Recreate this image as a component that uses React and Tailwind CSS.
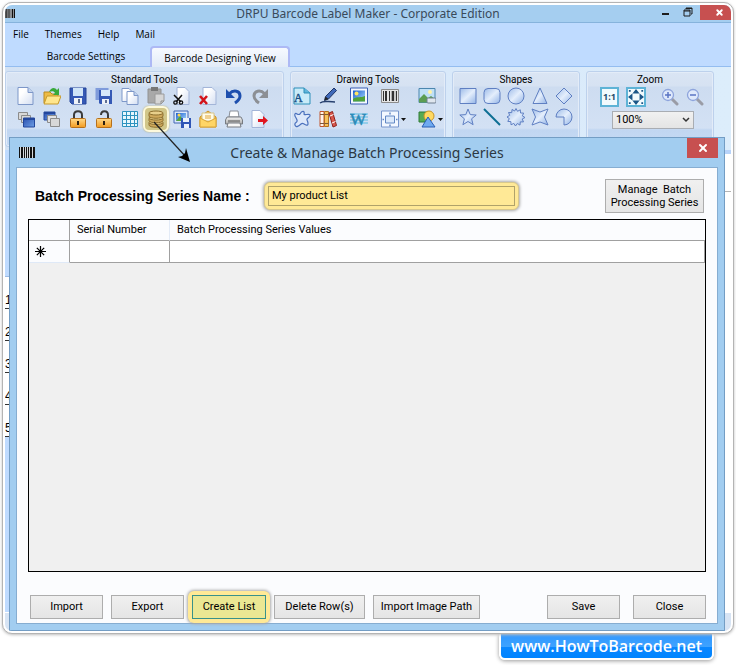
import { X } from 'lucide-react'

function Icon({ children, box = '0 0 18 18', className = 'size-[18px]' }) {
  return (
    <svg viewBox={box} className={`${className} shrink-0`} fill="none" aria-hidden="true">
      {children}
    </svg>
  )
}

function Gradients() {
  return (
    <svg className="absolute size-0" aria-hidden="true">
      <defs>
        <linearGradient id="page" x1="0" y1="0" x2="1" y2="1">
          <stop offset="0.3" stopColor="#ffffff" />
          <stop offset="1" stopColor="#d3def2" />
        </linearGradient>
        <linearGradient id="shape" x1="0" y1="0" x2="1" y2="1">
          <stop offset="0" stopColor="#9dbbe8" />
          <stop offset="0.5" stopColor="#e4eefc" />
          <stop offset="1" stopColor="#93b4e6" />
        </linearGradient>
        <linearGradient id="blue" x1="0" y1="0" x2="1" y2="1">
          <stop offset="0" stopColor="#2a4fae" />
          <stop offset="1" stopColor="#6fa0e6" />
        </linearGradient>
        <linearGradient id="gold" x1="0" y1="0" x2="0" y2="1">
          <stop offset="0" stopColor="#ffd98a" />
          <stop offset="1" stopColor="#f29a1f" />
        </linearGradient>
        <linearGradient id="grey" x1="0" y1="0" x2="0" y2="1">
          <stop offset="0" stopColor="#f4f4f4" />
          <stop offset="1" stopColor="#a9a9a9" />
        </linearGradient>
        <linearGradient id="sky" x1="0" y1="0" x2="1" y2="1">
          <stop offset="0" stopColor="#1d5fd0" />
          <stop offset="1" stopColor="#a9dcff" />
        </linearGradient>
      </defs>
    </svg>
  )
}

const Page = ({ x = 1 }) => (
  <>
    <path d={`M${x} .5h10l5 5v12h-15z`} fill="url(#page)" stroke="#7d97c8" />
    <path d={`M${x + 10} .5v5h5`} fill="#c3d3ee" stroke="#7d97c8" />
  </>
)

const Floppy = () => (
  <>
    <path d="M1 1h16v16H3l-2-2z" fill="#3559b5" stroke="#27479a" />
    <path d="M4 1h10v8H4z" fill="#cfe4f8" />
    <path d="M5 11h8v6H5z" fill="#eef2f8" />
    <path d="M9 12h2v4H9z" fill="#5d6f95" />
  </>
)

const Lock = ({ open }) => (
  <>
    <path d={open ? 'M6 5c0-5 7-5 7 0v4' : 'M5 9V5c0-5 8-5 8 0v4'} stroke="#3b3b3b" strokeWidth="2" />
    <rect x="1.5" y="8.5" width="15" height="9" rx="1" fill="url(#gold)" stroke="#b5701c" />
    <path d="M8 11h2v4H8z" fill="#2c2010" />
  </>
)

const STANDARD_TOOLS = [
  { name: 'New', art: <Page /> },
  {
    name: 'Open',
    art: (
      <>
        <path d="M1 16V5h6l2 2h6v9z" fill="#eebc45" stroke="#b98a21" />
        <path d="M1 17l3-8h14l-3 8z" fill="#ffe68d" stroke="#c79a2d" />
        <path d="M6 5c2-5 6-5 8-2l2-2v7h-6l2-2c-1-2-3-2-6-1z" fill="#39a939" />
      </>
    ),
  },
  { name: 'Save', art: <Floppy /> },
  {
    name: 'Save As',
    art: (
      <>
        <path d="M.5 1h13v12h-13z" fill="#7f9bdb" />
        <path d="M4 3h13v14H5l-1-1z" fill="#3559b5" />
        <path d="M6 3h9v6H6z" fill="#d6e8fa" />
        <path d="M7 12h7v5H7z" fill="#eef2f8" />
        <path d="M10 13h2v3h-2z" fill="#5d6f95" />
      </>
    ),
  },
  {
    name: 'Copy',
    art: (
      <>
        <path d="M1 1.500h7l3 3v10H1z" fill="url(#page)" stroke="#7d97c8" />
        <path d="M6 4.500h7l4 4v9H6z" fill="url(#page)" stroke="#7d97c8" />
        <path d="M13 4.500v4h4" fill="#c3d3ee" stroke="#7d97c8" />
      </>
    ),
  },
  {
    name: 'Paste',
    art: (
      <>
        <path d="M1 2h13v14H1z" fill="#a9a9a9" stroke="#929292" />
        <path d="M4 0h7v4H4z" fill="#777" />
        <path d="M8 7h9v7l-3 3H8z" fill="#d6d6d6" stroke="#9a9a9a" />
        <path d="M17 14h-3v3" stroke="#8f8f8f" />
      </>
    ),
  },
  {
    name: 'Cut',
    art: (
      <>
        <path d="M4 .5h8l4 4v13H4z" fill="url(#page)" stroke="#a3b5d8" />
        <path d="M1 8l7 7M9 8l-6 7" stroke="#111" strokeWidth="1.500" />
        <circle cx="2.500" cy="15.500" r="1.700" stroke="#111" strokeWidth="1.300" />
        <circle cx="8" cy="15.500" r="1.700" stroke="#111" strokeWidth="1.300" />
      </>
    ),
  },
  {
    name: 'Delete',
    art: (
      <>
        <path d="M4 .5h9l4 4v13H4z" fill="url(#page)" stroke="#a3b5d8" />
        <path d="M1 9l7 8M8 9l-7 8" stroke="#d3141b" strokeWidth="2.600" />
      </>
    ),
  },
  {
    name: 'Undo',
    art: (
      <>
        <path d="M4 7c5-5 11-3 11 2 0 3-2 5-5 7" stroke="#1d4fae" strokeWidth="3" />
        <path d="M1 2v9h9z" fill="#1d4fae" />
      </>
    ),
  },
  {
    name: 'Redo',
    art: (
      <>
        <path d="M14 7C9 2 3 4 3 9c0 3 2 5 5 7" stroke="#8c8f94" strokeWidth="3" />
        <path d="M17 2v9H8z" fill="#8c8f94" />
      </>
    ),
  },
  {
    name: 'Bring to Front',
    art: (
      <>
        <path d="M1.500 2.500h9v7h-9z" fill="#d8d8d8" stroke="#8b8b8b" />
        <path d="M4.500 5.500h9v7h-9z" fill="#d8d8d8" stroke="#8b8b8b" />
        <path d="M6.500 8h11v9h-11z" fill="url(#blue)" stroke="#23479c" />
        <path d="M6.500 8h11v2h-11z" fill="#23479c" />
      </>
    ),
  },
  {
    name: 'Send to Back',
    art: (
      <>
        <path d="M1 2h11v8H1z" fill="url(#blue)" stroke="#23479c" />
        <path d="M1 2h11v2H1z" fill="#23479c" />
        <path d="M4.500 5.500h9v7h-9z" fill="#e2e2e2" stroke="#8b8b8b" />
        <path d="M7.500 8.500h9v8h-9z" fill="#d8d8d8" stroke="#8b8b8b" />
      </>
    ),
  },
  { name: 'Lock', art: <Lock /> },
  { name: 'Unlock', art: <Lock open /> },
  {
    name: 'Grid',
    art: (
      <>
        <path d="M1.500 1.500h15v15h-15z" fill="#e8f7fd" />
        <path d="M1.500 1.500h15v15h-15zM1 5.500h16M1 9.500h16M1 13.500h16M5.500 1v16M9.500 1v16M13.500 1v16" stroke="#2f93bf" />
      </>
    ),
  },
  {
    name: 'Batch Processing Series',
    active: true,
    art: (
      <g fill="#cfa95c" stroke="#8d6f2e">
        <path d="M2 13v2c0 3 14 3 14 0v-2z" />
        <ellipse cx="9" cy="12.500" rx="7" ry="2" fill="#e8cf8b" />
        <path d="M2 8.500v2c0 3 14 3 14 0v-2z" />
        <ellipse cx="9" cy="8" rx="7" ry="2" fill="#e8cf8b" />
        <path d="M2 3.500v2.500c0 3 14 3 14 0V3.500z" />
        <ellipse cx="9" cy="3" rx="7" ry="2" fill="#e8cf8b" />
      </g>
    ),
  },
  {
    name: 'Save Image',
    art: (
      <>
        <path d="M1 1h14v12H1z" fill="#dbe8fa" stroke="#4064b4" />
        <path d="M3 3h10v8H3z" fill="url(#sky)" />
        <path d="M3 11l4-5 3 3 3-1v3z" fill="#58a53c" />
        <circle cx="6" cy="5" r="1.500" fill="#ffd64a" />
        <path d="M8 8h10v10H8z" fill="#2f56b6" />
        <path d="M10 8h6v4h-6zM11 14h5v4h-5z" fill="#e9f1fb" />
      </>
    ),
  },
  {
    name: 'Send Mail',
    art: (
      <>
        <path d="M1 7l8-6 8 6v10H1z" fill="#f4bf45" stroke="#c99024" />
        <path d="M3 3h12v8H3z" fill="#fffbe6" stroke="#d7c48c" />
        <path d="M6 6h6M6 8h6" stroke="#dfa43b" />
        <path d="M1 8l8 4 8-4v9H1z" fill="#ffd566" stroke="#d9a437" />
      </>
    ),
  },
  {
    name: 'Print',
    art: (
      <>
        <path d="M5 1h8l1 6H4z" fill="#fff" stroke="#8a8f98" />
        <path d="M2 7h14l1.500 3v4H.5v-4z" fill="url(#grey)" stroke="#777b81" />
        <path d="M3 13h12l1 4H2z" fill="#f7f7f7" stroke="#777b81" />
        <path d="M3 11h12" stroke="#555" />
      </>
    ),
  },
  {
    name: 'Exit',
    art: (
      <>
        <path d="M1 .5h8l4 4v13H1z" fill="url(#page)" stroke="#a3b5d8" />
        <path d="M7 9h5V6l5 4.500-5 4.500v-3H7z" fill="#e0151f" />
      </>
    ),
  },
]

const DRAWING_TOOLS = [
  {
    name: 'Text',
    art: (
      <>
        <path d="M1 1h10l6 5v11H1z" fill="#c9ebf8" stroke="#2d8fb9" />
        <path d="M11 1v5h6" fill="#5fb6da" stroke="#2d8fb9" />
        <text x="1" y="15" fontSize="12" fontFamily="Liberation Serif" fill="#174e86" stroke="#174e86" strokeWidth=".4">
          A
        </text>
      </>
    ),
  },
  {
    name: 'Pencil',
    art: (
      <>
        <path d="M15 1l2.500 2.500-8 8.500-4 1.500 1-4z" fill="#3f69b9" stroke="#1f3464" />
        <path d="M6.500 9.500l3 2.500-4 1.500z" fill="#222" />
        <path d="M1 16c4-3 7-1 15-1" stroke="#27406f" strokeWidth="1.500" />
      </>
    ),
  },
  {
    name: 'Picture',
    art: (
      <>
        <path d="M.5 1h17v16H.5z" fill="#f4f8ff" stroke="#3b5fb4" />
        <path d="M3 3.500h12v11H3z" fill="url(#sky)" />
        <path d="M3 12c4-3 8-1 12-3v5.500H3z" fill="#4fa23c" />
        <circle cx="6.500" cy="6.500" r="2" fill="#ffe564" />
      </>
    ),
  },
  {
    name: 'Barcode',
    art: (
      <>
        <path d="M.5 2.500h17v13H.5z" fill="#e6e6e6" stroke="#8b8b8b" />
        <path d="M2.500 4v10M8.500 4v10M15.500 4v10" stroke="#333" />
        <path d="M5 4v10M12 4v10" stroke="#333" strokeWidth="2" />
        <path d="M14 4v10M10.500 4v10" stroke="#888" strokeWidth=".6" />
      </>
    ),
  },
  {
    name: 'Watermark',
    art: (
      <>
        <path d="M1 1.500h16v14H1z" fill="#bfe0f6" stroke="#4b86ae" />
        <circle cx="12" cy="5" r="2" fill="#fff3a8" />
        <path d="M1 12l5-5 4 4 3-2 4 3v3.500H1z" fill="#5c9d52" />
        <rect x="9" y="11" width="9" height="5" rx="1" fill="#dfe6ee" stroke="#6f7f90" />
      </>
    ),
  },
  {
    name: 'Freeform',
    art: (
      <path
        d="M7 4c2-4 5-3 4 0 0 2 5-1 6 1s-4 3-3 5 2 6-1 5-3-3-5-1-5 4-6 1 3-2 2-5S1 6 2 4s3 2 5 0z"
        fill="#dde8fa"
        stroke="#4b71bd"
        strokeWidth="1.200"
      />
    ),
  },
  {
    name: 'Library',
    art: (
      <>
        <path d="M1 1.500h4v15H1z" fill="#fff4ea" stroke="#c3572f" />
        <path d="M5.500 1.500h4v15h-4z" fill="#f7c35c" stroke="#b5701c" />
        <path d="M10 3l3.500-1.500 4 14L14 17z" fill="#d9584d" stroke="#8e2019" />
        <path d="M1 4.500h4M1 13.500h4M5.500 4.500h4M5.500 13.500h4" stroke="#7e5a3a" />
        <path d="M11 6l3.500-1.500M13 13l3.500-1.500" stroke="#fff" />
      </>
    ),
  },
  {
    name: 'Word Art',
    art: (
      <>
        <path d="M0 4h18M0 7h18M0 10h18M0 13h18" stroke="#83c8e6" strokeWidth="1.500" />
        <text x="0" y="15" fontSize="17" fontFamily="Liberation Serif" fill="#2b8bb8" stroke="#2b8bb8" strokeWidth=".5">
          W
        </text>
      </>
    ),
  },
  {
    name: 'Align',
    menu: true,
    art: (
      <>
        <path d="M.5 1h17v16H.5z" fill="#f3f8ff" stroke="#7695cc" />
        <path d="M4.500 6h9v7h-9z" fill="#dbe9fb" stroke="#6288c4" />
        <path d="M9 2.500v2M9 14.500v2M1.500 9.500H3M15 9.500h1.500" stroke="#6288c4" strokeWidth="1.500" />
      </>
    ),
  },
  {
    name: 'Arrange Shapes',
    menu: true,
    art: (
      <>
        <path d="M1 2h9v10H1z" fill="#57ab54" stroke="#2f7a37" />
        <circle cx="11" cy="6" r="5" fill="#ffd963" stroke="#c79527" />
        <path d="M10 7l7 10H4z" fill="#6faaf0" stroke="#2a5eb4" />
      </>
    ),
  },
]

const SHAPES = [
  { name: 'Rectangle', art: <path d="M1 1.500h16v15H1z" /> },
  { name: 'Rounded rectangle', art: <rect x="1" y="1.500" width="16" height="15" rx="4" /> },
  { name: 'Ellipse', art: <circle cx="9" cy="9" r="8" /> },
  { name: 'Triangle', art: <path d="M9 1l7 15.500H2z" /> },
  { name: 'Diamond', art: <path d="M9 1l8 8-8 8-8-8z" /> },
  { name: 'Star', art: <path d="M9 1l2.200 5.600 6 .4-4.600 3.800 1.500 5.900L9 13.500l-5.100 3.200 1.500-5.900L.8 7l6-.4z" /> },
  { name: 'Line', art: <path d="M1 1l16 16" stroke="#0e6f93" strokeWidth="2" /> },
  {
    name: 'Burst',
    art: (
      <path d="M9 .5l1.500 2.800 2.800-1.500.2 3.200 3.200.1-1.400 2.700 2.700 1.700-2.800 1.500 1.300 2.900-3.200 0-.3 3.200-2.700-1.600L8.500 18l-1.700-2.600L4 16.800l-.1-3.200-3.100-.2 1.500-2.800L0 9l2.700-1.700L1.500 4.500l3.200.1.400-3.200L7.600 3z" />
    ),
  },
  { name: 'Four point star', art: <path d="M1 1l8 3 8-3-3.500 8L17 17l-8-3-8 3 3.500-8z" /> },
  { name: 'Pie', art: <path d="M1 9a8 8 0 1 1 8 8V9z" /> },
]

function Group({ title, className, children }) {
  return (
    <section
      className={`flex h-[76px] flex-col rounded-[3px] border border-[#bdd1ec] bg-[linear-gradient(#dae5f4_0px,#d6e2f2_14px,#cddcf0_15px,#d3e1f4_56px,#c1d6f1_58px,#c5daf5_100%)] shadow-[inset_0_0_0_1px_#e3ecf8] ${className}`}
    >
      <h2 className="text-center font-[Roboto,sans-serif] text-[10px] leading-[15px] text-black">{title}</h2>
      {children}
    </section>
  )
}

function Tool({ tool }) {
  return (
    <button
      type="button"
      title={tool.name}
      aria-label={tool.name}
      className={
        tool.active
          ? '-m-1 flex items-center rounded-md border-2 border-[#fdf9dc] bg-[#d1c689] p-0.5 shadow-[0_0_2px_#b9ad6a]'
          : 'flex items-center gap-0.5'
      }
    >
      <Icon>{tool.art}</Icon>
      {tool.menu && (
        <svg viewBox="0 0 5 3" className="h-[3px] w-[5px]" aria-hidden="true">
          <path d="M0 0h5L2.500 3z" fill="#111" />
        </svg>
      )}
    </button>
  )
}

function BarcodeMark({ className }) {
  return (
    <svg viewBox="0 0 16 11" className={className} preserveAspectRatio="none" aria-hidden="true">
      <path d="M0 0h16v11H0z" fill="#d5d8dc" />
      <path d="M0 0h1v11H0zM2 0h2v11H2zM5 0h1v11H5zM7 0h1v11H7zM9 0h1v11H9zM11 0h2v11h-2zM14 0h2v11h-2z" fill="#111" />
    </svg>
  )
}

function ZoomLens({ minus }) {
  return (
    <Icon>
      <path d="M11 11l5 5" stroke="#9a9ca6" strokeWidth="3" strokeLinecap="round" />
      <circle cx="7" cy="7" r="5.500" fill="#dfe9fb" stroke="#8ea4dc" strokeWidth="1.300" />
      <path d={minus ? 'M4 7h6' : 'M4 7h6M7 4v6'} stroke="#5b74c4" strokeWidth="1.500" />
    </Icon>
  )
}

function Ribbon() {
  return (
    <div className="flex h-[83px] gap-[6px] bg-[linear-gradient(90deg,#d3e2f4,#d9e9fa_60%,#dcedfb)] pt-1">
      <Group title="Standard Tools" className="w-[279px]">
        <div className="grid grid-cols-[repeat(10,26px)] gap-y-[5px] pl-[11px]">
          {STANDARD_TOOLS.map((t) => (
            <div key={t.name} className="flex size-[18px]">
              <Tool tool={t} />
            </div>
          ))}
        </div>
      </Group>
      <Group title="Drawing Tools" className="w-[156px]">
        <div className="grid grid-cols-[26px_31px_31px_37px_24px] justify-items-start gap-y-[5px] pl-[2px]">
          {DRAWING_TOOLS.map((t) => (
            <Tool key={t.name} tool={t} />
          ))}
        </div>
      </Group>
      <Group title="Shapes" className="w-[128px]">
        <div className="grid grid-cols-[repeat(5,24px)] gap-y-[3px] pl-[6px]">
          {SHAPES.map((s) => (
            <button key={s.name} type="button" aria-label={s.name} title={s.name} className="size-[18px]">
              <Icon>
                <g fill="url(#shape)" stroke="#5f7fc2">
                  {s.art}
                </g>
              </Icon>
            </button>
          ))}
        </div>
      </Group>
      <Group title="Zoom" className="w-[128px]">
        <div className="flex items-center pl-[13px]">
          <button
            type="button"
            className="h-5 w-[19px] border-2 border-[#5eb3d6] bg-[#f2fafd] font-['Noto_Sans'] text-[9px] leading-4 font-bold text-[#1f4e6e]"
          >
            1:1
          </button>
          <button type="button" aria-label="Fit page" className="ml-[7px] size-5 border-2 border-[#5eb3d6] bg-[#f2fafd]">
            <Icon className="size-4">
              <path d="M9 0l4 5H5zM9 18l-4-5h8zM0 9l5-4v8zM18 9l-5 4V5z" fill="#1c5687" />
              <path d="M1 2h2M15 2h2M1 16h2M15 16h2" stroke="#1c5687" strokeWidth="2" />
            </Icon>
          </button>
          <button type="button" aria-label="Zoom in" className="ml-[15px]">
            <ZoomLens />
          </button>
          <button type="button" aria-label="Zoom out" className="ml-[7px]">
            <ZoomLens minus />
          </button>
        </div>
        <div className="mt-1 ml-[25px] grid w-[82px] items-center">
          <select
            aria-label="Zoom level"
            defaultValue="100%"
            className="col-start-1 row-start-1 h-[18px] appearance-none border border-[#a9adb3] bg-gradient-to-b from-[#f1f1f1] to-[#e4e4e4] pl-[3px] font-[Roboto,sans-serif] text-[11px] leading-4 text-black"
          >
            <option>50%</option>
            <option>100%</option>
            <option>200%</option>
          </select>
          <svg viewBox="0 0 8 6" className="pointer-events-none col-start-1 row-start-1 mr-1 h-[6px] w-2 justify-self-end" aria-hidden="true">
            <path d="M1 1l3 3 3-3" fill="none" stroke="#333" strokeWidth="1.500" />
          </svg>
        </div>
      </Group>
    </div>
  )
}

function MainWindow() {
  return (
    <div className="col-start-1 row-start-1 flex min-w-0 flex-col">
      <header className="flex h-[18px] items-center border-b border-[#86b3dc] bg-[#a5cef0]">
        <div className="flex-1">
          <BarcodeMark className="h-[9px] w-[10px]" />
        </div>
        <h1 className="font-['Noto_Sans'] text-[12px] leading-4 whitespace-nowrap text-[#3a4a5a]">
          DRPU Barcode Label Maker - Corporate Edition
        </h1>
        <div className="flex flex-1 items-start justify-end self-start">
          <button type="button" aria-label="Minimize" className="mt-2 h-[2px] w-[7px] bg-[#1d1d1d]" />
          <button type="button" aria-label="Restore" className="mt-[2px] ml-[14px]">
            <Icon box="0 0 10 10" className="size-[10px]">
              <path d="M3 2V1h6v6H8M1 3h6v6H1zM1 4h6M3 1.500h6" stroke="#1d1d1d" />
            </Icon>
          </button>
          <button
            type="button"
            aria-label="Close window"
            className="ml-[7px] flex h-[15px] w-[31px] items-center justify-center bg-[#c75050] pl-2 text-white"
          >
            <X className="size-[9px]" strokeWidth={5} />
          </button>
        </div>
      </header>
      <nav className="flex h-[22px] items-center gap-4 bg-[#bfdbff] pl-2 text-[10px] leading-4 text-black">
        <a href="#file">File</a>
        <a href="#themes">Themes</a>
        <a href="#help">Help</a>
        <a href="#mail">Mail</a>
      </nav>
      <div className="flex h-[22px] items-end border-b border-[#94bdf0] bg-[#bfdbff] text-[10px] leading-4 text-black">
        <button type="button" className="h-5 w-[145px] pl-[17px]">
          Barcode Settings
        </button>
        <button
          type="button"
          className="-mb-px h-[21px] w-[140px] rounded-t-[4px] border-2 border-b-0 border-[#adb9f5] bg-gradient-to-b from-[#f6f9ff] to-[#e2ebf7]"
        >
          Barcode Designing View
        </button>
      </div>
      <Ribbon />
      <div className="flex flex-1 bg-white">
        <div className="flex w-5 flex-col">
          <div className="h-[127px] border-b border-[#9dbbe4] bg-[#bfdbff]" />
          {[1, 2, 3, 4, 5].map((n) => (
            <div
              key={n}
              className="flex h-8 items-end border-b border-[#333] font-['Liberation_Sans'] text-[12px] leading-4 text-black"
            >
              {n}
            </div>
          ))}
          <div className="flex-1 bg-[#bfdbff]" />
        </div>
        <div className="flex flex-1 flex-col">
          <div className="h-1 bg-[#b7d3fa]" />
          <div className="mt-[37px] border-t border-[#b4b4b4]" />
        </div>
      </div>
      <footer className="h-[19px] border-t border-white bg-[#d7e4f4]" />
    </div>
  )
}

function PushButton({ children, className = 'w-[73px]' }) {
  return (
    <button
      type="button"
      className={`h-6 border border-[#adadad] bg-gradient-to-b from-[#f0f0f0] to-[#e5e5e5] leading-4 whitespace-nowrap ${className}`}
    >
      {children}
    </button>
  )
}

function BatchDialog() {
  return (
    <div
      role="dialog"
      aria-labelledby="dialog-title"
      className="z-10 col-start-1 row-start-1 mt-[132px] mr-[6px] ml-1 flex min-w-0 flex-col border border-[#739dc4] bg-[#a2cdf0] px-[6px] pb-[6px]"
    >
      <header className="flex h-[29px] items-center">
        <div className="flex-1">
          <BarcodeMark className="ml-[3px] h-[11px] w-4" />
        </div>
        <h2 id="dialog-title" className="font-['Noto_Sans'] text-[14px] leading-5 whitespace-nowrap text-[#2c3843]">
          Create &amp; Manage Batch Processing Series
        </h2>
        <div className="flex flex-1 justify-end self-start">
          <button
            type="button"
            aria-label="Close dialog"
            className="flex h-5 w-[31px] items-center justify-center bg-[#c75050] text-white"
          >
            <X className="size-3" strokeWidth={4} />
          </button>
        </div>
      </header>
      <div className="flex flex-1 flex-col border border-[#86add1] bg-[#fbfcfe] px-[11px] pt-[11px] pb-1 font-[Roboto,sans-serif] text-[11px] text-black">
        <div className="flex h-[34px] items-center pr-[2px] pl-[7px]">
          <label
            htmlFor="series"
            className="w-[229px] font-['Liberation_Sans'] text-[14px] leading-4 font-bold whitespace-nowrap"
          >
            Batch Processing Series Name :
          </label>
          <div className="flex h-7 w-[255px] rounded-md border border-[#d8c88c] bg-[#ffe996] p-[3px] shadow-[0_0_3px_1px_#a9a9a9]">
            <input
              id="series"
              type="text"
              defaultValue="My product List"
              className="w-full border border-[#b0a26a] bg-[#ffe996] px-[3px] leading-4 outline-none"
            />
          </div>
          <button
            type="button"
            className="ml-auto h-[34px] w-[99px] border border-[#adadad] bg-gradient-to-b from-[#f0f0f0] to-[#e5e5e5] leading-[13px] whitespace-pre"
          >
            {'Manage  Batch\nProcessing Series'}
          </button>
        </div>
        <div className="mt-[6px] min-h-[353px] flex-1 border border-black bg-[#f0f0f0]">
          <table className="w-full table-fixed border-separate border-spacing-0 text-left">
            <colgroup>
              <col className="w-[41px]" />
              <col className="w-[100px]" />
              <col />
            </colgroup>
            <thead>
              <tr className="h-[21px] bg-[#fbfcfe] leading-4">
                <th aria-label="Row" className="border-r border-b border-[#a0a0a0]" />
                <th className="border-r border-b border-r-[#e3ebf7] border-b-[#a0a0a0] pl-[7px] font-normal">
                  Serial Number
                </th>
                <th className="border-b border-[#a0a0a0] pl-[7px] font-normal">Batch Processing Series Values</th>
              </tr>
            </thead>
            <tbody>
              <tr className="h-[22px] bg-white">
                <td className="border-r border-b border-r-[#a0a0a0] border-b-[#dfe9f7] bg-[#fbfcfe] pl-[6px]">
                  <Icon box="0 0 9 9" className="size-[11px]">
                    <path d="M4.500 0v9M0 4.500h9M1.500 1.500l6 6M7.500 1.500l-6 6" stroke="#000" />
                  </Icon>
                </td>
                <td className="border-r border-b border-[#a0a0a0]" />
                <td className="border-r border-b border-[#a0a0a0]" />
              </tr>
            </tbody>
          </table>
        </div>
        <div className="mt-[23px] flex gap-2 pl-[2px]">
          <PushButton>Import</PushButton>
          <PushButton>Export</PushButton>
          <div className="-m-1 rounded-md bg-[#ffe996] p-1 shadow-[0_0_3px_1px_#a9a9a9]">
            <button type="button" className="h-6 w-[74px] border border-[#38918a] bg-[#ebe793] leading-4 whitespace-nowrap">
              Create List
            </button>
          </div>
          <PushButton className="w-[91px]">Delete Row(s)</PushButton>
          <PushButton className="w-[107px]">Import Image Path</PushButton>
          <div className="ml-auto flex gap-[13px]">
            <PushButton>Save</PushButton>
            <PushButton>Close</PushButton>
          </div>
        </div>
      </div>
    </div>
  )
}

export default function App() {
  return (
    <div className="min-h-screen bg-white p-[2px] font-['Open_Sans','Noto_Sans',sans-serif]">
      <Gradients />
      <div className="relative rounded-[10px] border border-[#b4b4b4] bg-white p-[2px] shadow-[0_1px_3px_#bdbdbd]">
        <div className="grid overflow-hidden rounded-[7px]">
          <MainWindow />
          <BatchDialog />
        </div>
        {/* callout from the batch tool to the dialog */}
        <svg viewBox="0 0 40 44" className="absolute top-[118px] left-[150px] z-20 h-[44px] w-10" aria-hidden="true">
          <path d="M1 1l32 35" stroke="#222" strokeWidth="1.200" />
          <path d="M37 41l-12-5 4-1 3-3 1-5z" fill="#000" />
        </svg>
      </div>
      <div className="flex justify-end pr-5">
        <a
          href="https://www.howtobarcode.net"
          className="rounded-b-md border-2 border-t-0 border-white bg-[linear-gradient(#2f97ff_0%,#3fa3ff_55%,#0a87ff_56%,#0084ff_100%)] px-[10px] text-[16px] leading-6 font-semibold text-white shadow-[0_1px_4px_#9a9a9a]"
        >
          www.HowToBarcode.net
        </a>
      </div>
    </div>
  )
}
